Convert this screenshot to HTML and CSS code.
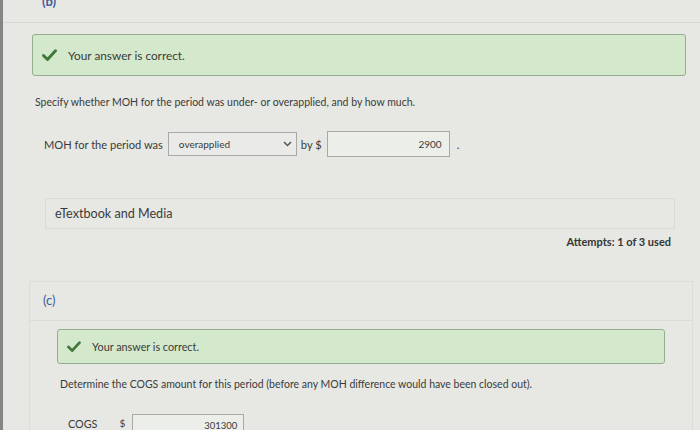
FILE: index.html
```html
<!DOCTYPE html>
<html>
<head>
<meta charset="utf-8">
<link rel="stylesheet" href="styles.css">
</head>
<body>
<div class="page">
  <div class="part-head"><span class="part-label">(b)</span></div>
  <div class="part-body">
    <div class="correct big">
      <svg class="check" width="15" height="12" viewBox="0 0 15 12"><path d="M1.5 6.5 L5.5 10.5 L13.5 1.8" fill="none" stroke="#3f7a3c" stroke-width="3" stroke-linecap="round" stroke-linejoin="round"/></svg>
      <span>Your answer is correct.</span>
    </div>
    <p class="question">Specify whether MOH for the period was under- or overapplied, and by how much.</p>
    <div class="answer-row">
      <span class="lbl">MOH for the period was</span>
      <div class="select"><span>overapplied</span>
        <svg width="9" height="6" viewBox="0 0 9 6"><path d="M1 1 L4.5 4.5 L8 1" fill="none" stroke="#555" stroke-width="1.5"/></svg>
      </div>
      <span class="lbl by">by $</span>
      <div class="input wide">2900</div>
      <span class="dot">.</span>
    </div>
    <div class="media">eTextbook and Media</div>
    <div class="attempts">Attempts: 1 of 3 used</div>
  </div>
  <div class="part-c">
    <div class="c-head"><span class="part-label">(c)</span></div>
    <div class="c-body">
      <div class="correct small">
        <svg class="check" width="14" height="11" viewBox="0 0 15 12"><path d="M1.5 6.5 L5.5 10.5 L13.5 1.8" fill="none" stroke="#3f7a3c" stroke-width="3" stroke-linecap="round" stroke-linejoin="round"/></svg>
        <span>Your answer is correct.</span>
      </div>
      <p class="question small-q">Determine the COGS amount for this period (before any MOH difference would have been closed out).</p>
      <div class="cogs-row">
        <span class="lbl cogs">COGS</span>
        <span class="lbl dollar">$</span>
        <div class="input cogs-in">301300</div>
      </div>
    </div>
  </div>
</div>
</body>
</html>
```
FILE: styles.css
```css
html, body {
  margin: 0;
  padding: 0;
  background: #e7e8e4;
  overflow: hidden;
}
body {
  font-family: Lato, "Open Sans", sans-serif;
  color: #3a3b3a;
}
.page {
  width: 697px;
  height: 430px;
  border-left: 3px solid #858683;
  overflow: hidden;
}
.part-head {
  height: 22px;
  border-bottom: 1px solid #d7d8d4;
  padding-left: 39px;
}
.part-label {
  display: block;
  font-size: 13px;
  color: #3c5d9c;
  font-weight: 700;
}
.part-head .part-label {
  line-height: 2px;
}
.part-body {
  padding: 11px 14px 0 29px;
}
.correct {
  display: flex;
  align-items: center;
  background: #d4e8cb;
  border: 1px solid #93ad8f;
  border-radius: 3px;
  box-sizing: border-box;
}
.correct.big {
  height: 42px;
  padding-left: 9px;
  font-size: 11.8px;
}
.correct.big .check { margin-right: 11px; }
.correct.small {
  height: 35px;
  padding-left: 9px;
  font-size: 10.8px;
  width: 608px;
}
.correct.small .check { margin-right: 11px; }
.question {
  margin: 18px 0 0 3px;
  font-size: 10.5px;
  line-height: 16px;
}
.answer-row {
  display: flex;
  align-items: center;
  margin: 21px 0 0 12px;
  height: 26px;
}
.lbl { font-size: 11.1px; }
.select {
  box-sizing: border-box;
  width: 129px;
  height: 24px;
  margin-left: 5px;
  border: 1px solid #a8a9a6;
  background: #eaebe8;
  display: flex;
  align-items: center;
  justify-content: space-between;
  padding: 0 4px 0 10px;
  font-size: 10px;
}
.by { margin-left: 4px; }
.input {
  box-sizing: border-box;
  border: 1px solid #a8a9a6;
  background: #eceeea;
  text-align: right;
  font-size: 10px;
  display: flex;
  align-items: center;
  justify-content: flex-end;
}
.input.wide {
  width: 123px;
  height: 26px;
  margin-left: 5px;
  padding-right: 7px;
}
.dot { margin-left: 7px; font-size: 11px; }
.media {
  box-sizing: border-box;
  margin: 41px 0 0 13px;
  width: 630px;
  height: 31px;
  border: 1px solid #dadbd7;
  padding-left: 9px;
  display: flex;
  align-items: center;
  font-size: 12.6px;
}
.attempts {
  text-align: right;
  margin: 6px 15px 0 0;
  font-size: 11px;
  font-weight: 700;
  line-height: 14px;
  color: #353635;
}
.part-c {
  margin: 32px 7px 0 26px;
  border: 1px solid #dcddd9;
  border-bottom: none;
}
.c-head {
  height: 39px;
  border-bottom: 1px solid #dcddd9;
  padding: 10px 0 0 13px;
  box-sizing: border-box;
}
.c-head .part-label {
  line-height: 16px;
  font-weight: 400;
}
.c-body {
  padding: 8px 0 0 27px;
}
.small-q {
  margin: 13px 0 0 3px;
  font-size: 10.5px;
  line-height: 14px;
}
.cogs-row {
  display: flex;
  align-items: flex-start;
  margin: 23px 0 0 11px;
}
.cogs { font-size: 10.8px; margin-top: 3px; }
.dollar { font-size: 10px; margin: 3px 0 0 22px; }
.input.cogs-in {
  width: 112px;
  height: 22px;
  margin-left: 7px;
  padding-right: 6px;
  font-size: 9.5px;
}
```
